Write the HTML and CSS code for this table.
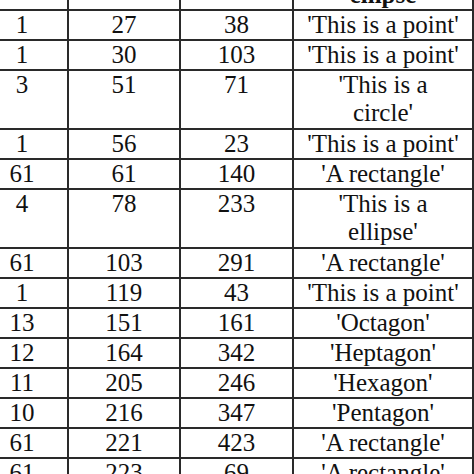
FILE: index.html
```html
<!DOCTYPE html>
<html>
<head>
<meta charset="utf-8">
<link rel="stylesheet" href="styles.css">
</head>
<body>
<div class="frame">
<table class="shapes">
<colgroup>
<col class="c1"><col class="c2"><col class="c3"><col class="c4">
</colgroup>
<tbody>
<tr class="head"><td></td><td></td><td></td><td>ellipse</td></tr>
<tr><td>1</td><td>27</td><td>38</td><td>'This is a point'</td></tr>
<tr><td>1</td><td>30</td><td>103</td><td>'This is a point'</td></tr>
<tr class="tall"><td>3</td><td>51</td><td>71</td><td>'This is a<br>circle'</td></tr>
<tr><td>1</td><td>56</td><td>23</td><td>'This is a point'</td></tr>
<tr><td>61</td><td>61</td><td>140</td><td>'A rectangle'</td></tr>
<tr class="tall"><td>4</td><td>78</td><td>233</td><td>'This is a<br>ellipse'</td></tr>
<tr><td>61</td><td>103</td><td>291</td><td>'A rectangle'</td></tr>
<tr><td>1</td><td>119</td><td>43</td><td>'This is a point'</td></tr>
<tr><td>13</td><td>151</td><td>161</td><td>'Octagon'</td></tr>
<tr><td>12</td><td>164</td><td>342</td><td>'Heptagon'</td></tr>
<tr><td>11</td><td>205</td><td>246</td><td>'Hexagon'</td></tr>
<tr><td>10</td><td>216</td><td>347</td><td>'Pentagon'</td></tr>
<tr><td>61</td><td>221</td><td>423</td><td>'A rectangle'</td></tr>
<tr><td>61</td><td>223</td><td>69</td><td>'A rectangle'</td></tr>
</tbody>
</table>
</div>
</body>
</html>
```

FILE: styles.css
```css
html, body {
  margin: 0;
  padding: 0;
  background: #fff;
}
.frame {
  width: 474px;
  height: 474px;
  overflow: hidden;
}
.shapes {
  border-collapse: collapse;
  table-layout: fixed;
  width: 497px;
  margin-left: -25px;
  margin-top: -21px;
  font-family: "Liberation Serif", "Times New Roman", serif;
  font-size: 25px;
  line-height: 28px;
  color: #111;
}
.c1 { width: 92px; }
.c2 { width: 112px; }
.c3 { width: 113px; }
.c4 { width: 180px; }
.shapes td {
  border: 2px solid #2a2a2a;
  padding: 0;
  text-align: center;
  vertical-align: top;
  white-space: nowrap;
}
.shapes tr.head td {
  font-weight: bold;
}
.shapes tr.tall td {
  padding-bottom: 1px;
}
```
